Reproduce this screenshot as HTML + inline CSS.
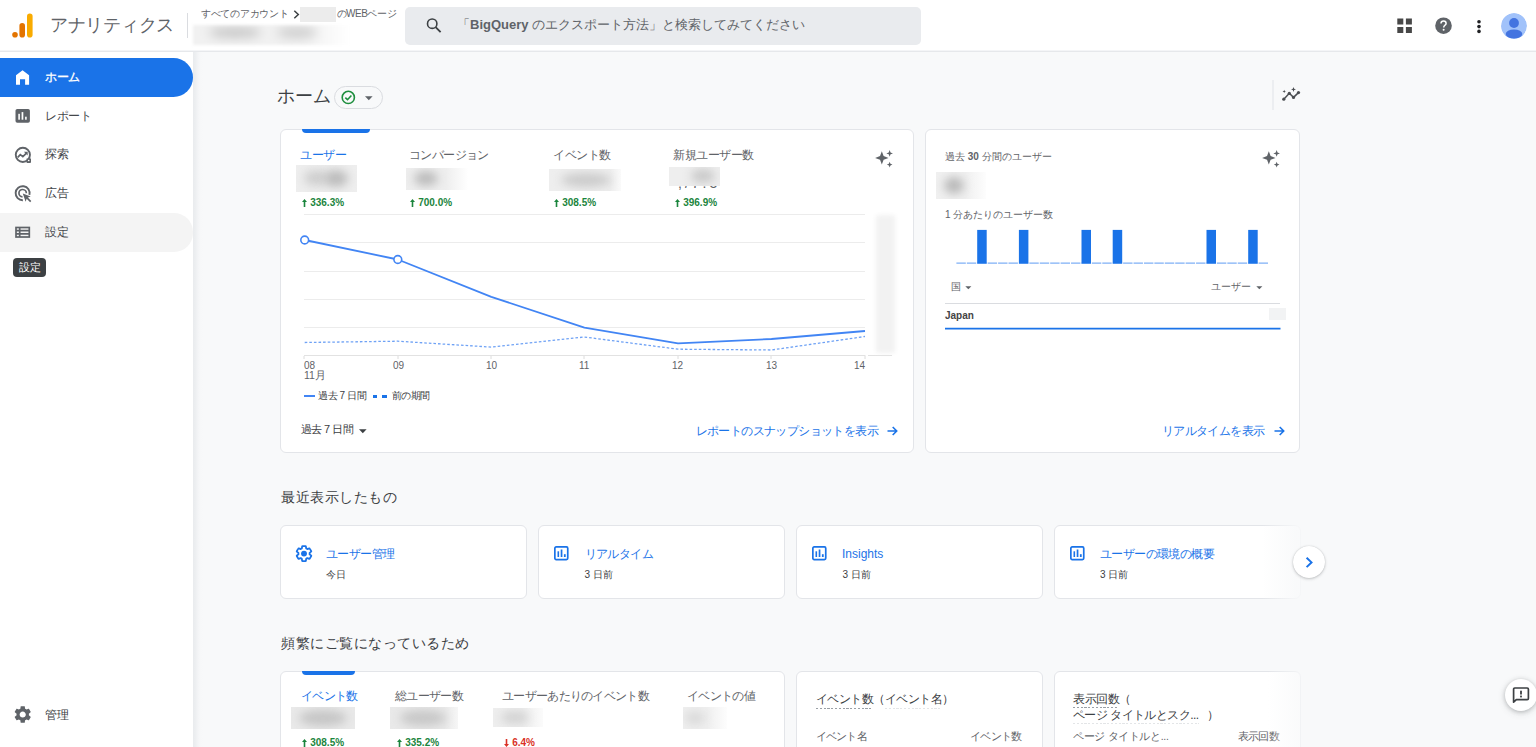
<!DOCTYPE html>
<html lang="ja">
<head>
<meta charset="utf-8">
<title>アナリティクス</title>
<style>
*{box-sizing:border-box;margin:0;padding:0}
html,body{width:1536px;height:747px;overflow:hidden}
body{font-family:"Liberation Sans",sans-serif;background:#f8f9fa;color:#3c4043;position:relative;font-size:12px}
.abs{position:absolute}
svg{display:block;position:absolute;overflow:visible}
.t{position:absolute;white-space:nowrap;line-height:1}
/* header */
#hdr{position:absolute;left:0;top:0;width:1536px;height:52px;background:#fff;border-bottom:1px solid #e6e8eb;z-index:5}
#hdr:after{content:"";position:absolute;left:0;top:50px;width:1536px;height:1px;background:#f4f5f7}
#side{position:absolute;left:0;top:50px;width:193px;height:697px;background:#fff;z-index:4}
#side:after{content:"";position:absolute;left:193px;top:0;width:10px;height:697px;background:linear-gradient(90deg,#e9ebee 0,#edeff1 25%,#f3f4f6 50%,#f7f8f9 75%,#f8f9fa 100%)}
.nav{position:absolute;left:0;width:193px;height:38px;border-radius:0 19px 19px 0}
.nav .t{left:45px;top:13px;font-size:12px;letter-spacing:-.4px;color:#44474b}
.card{position:absolute;background:#fff;border:1px solid #e3e5e9;border-radius:6px}
.blue{color:#1a73e8}
.g{color:#5f6368}
.blur{position:absolute;filter:blur(3px);background:#d4d4d4;border-radius:4px}
.bz{position:absolute;background:#eee;overflow:hidden;filter:blur(.7px)}
.bz i{position:absolute;display:block;background:#bcbcbc;filter:blur(5px);border-radius:50%}
.c12{font-size:12px;letter-spacing:-.45px}
.h14{font-size:14px;letter-spacing:.5px;color:#3c4043}
.pct svg{position:static;display:inline-block;vertical-align:-1px;margin-right:3px}
.pct{position:absolute;white-space:nowrap;line-height:1;font-size:10px;font-weight:bold;color:#1b853d}
.pct.red{color:#d93025}
</style>
</head>
<body>

<!-- ================= HEADER ================= -->
<div id="hdr">
  <!-- logo -->
  <svg style="left:12px;top:13px" width="22" height="26" viewBox="0 0 22 26">
    <rect x="15" y="0.6" width="5.6" height="24" rx="2.8" fill="#f9ab00"/>
    <rect x="7.4" y="10" width="5.6" height="14.6" rx="2.8" fill="#e37400"/>
    <circle cx="3" cy="21.8" r="2.8" fill="#e37400"/>
  </svg>
  <div class="t" style="left:50px;top:16px;font-size:18px;color:#5f6368;letter-spacing:-0.3px">アナリティクス</div>
  <div class="abs" style="left:187px;top:13px;width:1px;height:25px;background:#dadce0"></div>
  <!-- property picker -->
  <div class="t" style="left:201px;top:9px;font-size:10px;letter-spacing:-.3px;color:#5f6368">すべてのアカウント</div>
  <svg style="left:293px;top:10px" width="7" height="9" viewBox="0 0 7 9"><path d="M1.300 0.800 L5.300 4.500 L1.300 8.200" fill="none" stroke="#3c4043" stroke-width="1.500"/></svg>
  <div class="abs" style="left:300px;top:7px;width:36px;height:15px;background:#ececec"></div>
  <div class="t" style="left:336.500px;top:9px;font-size:10px;letter-spacing:-.45px;color:#5f6368">のWEBページ</div>
  <div class="bz" style="left:193px;top:25px;width:157px;height:20px;background:linear-gradient(90deg,#f1f1f1 70%,#fff);filter:blur(1.500px)"><i style="left:16px;top:2px;width:52px;height:11px;background:#c9c9c9"></i><i style="left:84px;top:2px;width:40px;height:11px;background:#cfcfcf"></i></div>
  <!-- search -->
  <div class="abs" style="left:405px;top:6.500px;width:516px;height:38.500px;background:#e9ebee;border-radius:5px"></div>
  <svg style="left:425px;top:17px" width="18" height="18" viewBox="0 0 18 18">
    <circle cx="7.200" cy="6.700" r="4.700" fill="none" stroke="#3c4043" stroke-width="1.600"/>
    <path d="M10.600 10.100 L15.600 15.100" stroke="#3c4043" stroke-width="1.800" stroke-linecap="butt"/>
  </svg>
  <div class="t" style="left:457px;top:17.500px;font-size:13px;color:#5f6368">「<b>BigQuery</b> のエクスポート方法」と検索してみてください</div>
  <!-- right icons -->
  <svg style="left:1397px;top:18px" width="15" height="15" viewBox="0 0 15 15">
    <rect x="0.3" y="0.5" width="6" height="6" fill="#474747"/><rect x="8.9" y="0.5" width="6" height="6" fill="#474747"/>
    <rect x="0.3" y="9" width="6" height="6" fill="#474747"/><rect x="8.9" y="9" width="6" height="6" fill="#474747"/>
  </svg>
  <svg style="left:1435px;top:17px" width="17" height="17" viewBox="0 0 17 17">
    <circle cx="8.5" cy="8.7" r="8.3" fill="#5f6368"/>
    <path d="M6 6.6c0-1.5 1.1-2.5 2.6-2.5s2.5 1 2.5 2.3c0 1.8-2.4 2-2.4 4" fill="none" stroke="#fff" stroke-width="1.5"/>
    <circle cx="8.6" cy="12.8" r="1" fill="#fff"/>
  </svg>
  <svg style="left:1476px;top:19px" width="6" height="15" viewBox="0 0 6 15">
    <circle cx="3" cy="2.8" r="1.8" fill="#202124"/><circle cx="3" cy="7.6" r="1.8" fill="#202124"/><circle cx="3" cy="12.4" r="1.8" fill="#202124"/>
  </svg>
  <svg style="left:1501px;top:12.600px;border-radius:50%;overflow:hidden" width="26" height="26" viewBox="0 0 26 26">
    <circle cx="13" cy="13" r="13" fill="#a1c2fa"/>
    <circle cx="13" cy="10" r="4.900" fill="#4374e0"/><ellipse cx="13" cy="21" rx="8.300" ry="4.600" fill="#4374e0"/>
  </svg>
</div>

<!-- ================= SIDEBAR ================= -->
<div id="side">
  <div class="nav" style="top:8px;height:39px;border-radius:0 20px 20px 0;background:#1a73e8"><div class="t" style="color:#fff;-webkit-text-stroke:.35px #fff">ホーム</div></div>
  <div class="nav" style="top:47px"><div class="t">レポート</div></div>
  <div class="nav" style="top:85px"><div class="t">探索</div></div>
  <div class="nav" style="top:124px"><div class="t">広告</div></div>
  <div class="nav" style="top:163px;height:38.500px;background:#f4f4f4"><div class="t">設定</div></div>
  <div class="abs" style="left:13px;top:208px;width:33px;height:19px;background:#3c4043;border-radius:4px"></div>
  <div class="t" style="left:19px;top:212px;font-size:11px;color:#fff">設定</div>
  <div class="t" style="left:45px;top:659px;font-size:12px;letter-spacing:-.4px;color:#3c4043">管理</div>
  
  <svg style="left:0;top:0" width="193" height="697" viewBox="0 0 193 697">
    <!-- home -->
    <path d="M22.55 20.2 L29.100 25.300 V34.800 H25.100 V29.300 H20 V34.800 H16 V25.300 Z" fill="#fff"/>
    <!-- reports -->
    <rect x="15.500" y="58.900" width="14.400" height="13.900" rx="1.800" fill="#5f6368"/>
    <rect x="18.300" y="63.800" width="1.600" height="5.900" fill="#fff"/><rect x="21.600" y="62.100" width="1.700" height="7.600" fill="#fff"/><rect x="25.100" y="66.700" width="1.600" height="3" fill="#fff"/>
    <!-- explore -->
    <circle cx="22.850" cy="104.850" r="7.100" fill="none" stroke="#5f6368" stroke-width="1.900"/>
    <path d="M26.600 108.600 H31 V112 Q31 113 30 113 H26.600 Z" fill="#5f6368"/>
    <circle cx="28.700" cy="110.500" r="0.800" fill="#fff"/>
    <path d="M17.700 107.300 L20.300 104.700 L22.850 106.700 L26.500 103.100" fill="none" stroke="#5f6368" stroke-width="1.700"/>
    <path d="M23.900 101.700 H27.700 V105.500 Z" fill="#5f6368"/>
    <!-- advertising -->
    <path d="M29.43 144.89 A7 7 0 1 0 22.88 150.20" fill="none" stroke="#5f6368" stroke-width="1.900"/>
    <path d="M26.34 143.33 A3.700 3.700 0 1 0 22.51 146.90" fill="none" stroke="#5f6368" stroke-width="1.700"/>
    <path d="M22.800 143.400 L30.700 146.400 L27.900 147.600 L31.300 151 L30.100 152.200 L26.700 148.800 L25.600 151.700 Z" fill="#5f6368"/>
    <!-- configure -->
    <g fill="none" stroke="#5f6368" stroke-width="1.700">
      <rect x="16" y="177.500" width="13.300" height="9.500"/>
      <path d="M16 180.650 H29.300 M16 183.850 H29.300 M19.700 177.500 V187"/>
    </g>
    <!-- admin gear -->
    <g transform="translate(12.400,654.200) scale(0.860)"><path d="M19.14 12.94c.04-.3.06-.61.06-.94 0-.32-.02-.64-.07-.94l2.03-1.58c.18-.14.23-.41.12-.61l-1.92-3.32c-.12-.22-.37-.29-.59-.22l-2.39.96c-.5-.38-1.03-.7-1.62-.94l-.36-2.54c-.04-.24-.24-.41-.48-.41h-3.84c-.24 0-.43.17-.47.41l-.36 2.54c-.59.24-1.13.57-1.62.94l-2.39-.96c-.22-.08-.47 0-.59.22L2.74 8.87c-.12.21-.08.47.12.61l2.03 1.58c-.05.3-.09.63-.09.94s.02.64.07.94l-2.03 1.58c-.18.14-.23.41-.12.61l1.92 3.32c.12.22.37.29.59.22l2.39-.96c.5.38 1.03.7 1.62.94l.36 2.54c.05.24.24.41.48.41h3.84c.24 0 .44-.17.47-.41l.36-2.54c.59-.24 1.13-.56 1.62-.94l2.39.96c.22.08.47 0 .59-.22l1.92-3.32c.12-.22.07-.47-.12-.61l-2.01-1.58zM12 15.6c-1.98 0-3.6-1.62-3.6-3.6s1.62-3.6 3.600-3.600 3.600 1.620 3.600 3.600-1.620 3.600-3.600 3.600z" fill="#5f6368"/></g>
  </svg>

</div>

<!-- ================= PAGE TITLE ================= -->
<div class="t" style="left:277px;top:87px;font-size:18px;color:#3c4043">ホーム</div>
<div class="abs" style="left:334px;top:86px;width:49px;height:23px;border:1px solid #dadce0;border-radius:12px"></div>
<svg style="left:341px;top:90px" width="15" height="15" viewBox="0 0 15 15">
  <circle cx="7.3" cy="7.4" r="6.1" fill="none" stroke="#1e8e3e" stroke-width="1.6"/>
  <path d="M4.3 7.6 L6.5 9.7 L10.4 5.5" fill="none" stroke="#1e8e3e" stroke-width="1.6"/>
</svg>
<svg style="left:365px;top:95.5px" width="8" height="5" viewBox="0 0 8 5"><path d="M0 0.3h7.6L3.8 4.2z" fill="#5f6368"/></svg>
<div class="abs" style="left:1272px;top:80px;width:2px;height:29.500px;background:#eceef1"></div>
<svg style="left:1280px;top:85px" width="22" height="18" viewBox="1280 85 22 18">
  <polyline points="1283.800,99.200 1289.300,93.300 1293.500,97.400 1298.500,92.600" fill="none" stroke="#4a4d51" stroke-width="1.500"/>
  <g fill="#4a4d51"><circle cx="1283.800" cy="99.200" r="1.600"/><circle cx="1289.300" cy="93.300" r="1.600"/><circle cx="1293.500" cy="97.400" r="1.600"/><circle cx="1298.500" cy="92.600" r="1.600"/>
  <path d="M1293.500 86.900 l.700 1.800 1.800.700 -1.800.700 -.700 1.800 -.700-1.800 -1.800-.700 1.800-.700z"/>
  <path d="M1284.200 89.700 l.500 1.200 1.200.500 -1.200.500 -.500 1.200 -.500-1.200 -1.200-.500 1.200-.500z"/></g>
</svg>


<!-- ================= CARD 1 : overview chart ================= -->
<div class="card" style="left:280px;top:129px;width:633.500px;height:324px"></div>
<div class="abs" style="left:302px;top:129px;width:68px;height:4px;background:#1a73e8;border-radius:0 0 4px 4px"></div>
<div class="t blue" style="left:300px;top:149px;font-size:12px;letter-spacing:-.45px">ユーザー</div>
<div class="t g" style="left:409px;top:149px;font-size:12px;letter-spacing:-.6px">コンバージョン</div>
<div class="t g" style="left:553px;top:149px;font-size:12px;letter-spacing:-.45px">イベント数</div>
<div class="t g" style="left:673px;top:149px;font-size:12px;letter-spacing:-.45px">新規ユーザー数</div>
<div class="bz" style="left:296px;top:165px;width:61px;height:27px"><i style="left:8px;top:5px;width:24px;height:16px;background:#cfcfcf"></i><i style="left:28px;top:5px;width:24px;height:17px"></i></div>
<div class="bz" style="left:406px;top:168px;width:73px;height:22px;background:linear-gradient(90deg,#eee 55%,#fff 85%)"><i style="left:8px;top:3px;width:24px;height:15px"></i></div>
<div class="bz" style="left:549px;top:169px;width:72px;height:22px;background:linear-gradient(90deg,#eee 85%,#fafafa)"><i style="left:12px;top:4px;width:50px;height:14px;background:#cbcbcb"></i></div>
<div class="t" style="left:678px;top:176px;font-size:14px;color:#5f6368;letter-spacing:3px">,/7.3</div>
<div class="bz" style="left:669px;top:167px;width:51px;height:19px"><i style="left:22px;top:2px;width:24px;height:14px;background:#c9c9c9"></i></div>
<div class="pct" style="left:302.2px;top:197.5px"><svg width="5" height="8" viewBox="0 0 5 8"><path d="M2.500 0 L5 2.900 H3.300 V8 H1.700 V2.900 H0 Z" fill="currentColor"/></svg>336.3%</div>
<div class="pct" style="left:410.2px;top:197.5px"><svg width="5" height="8" viewBox="0 0 5 8"><path d="M2.500 0 L5 2.900 H3.300 V8 H1.700 V2.900 H0 Z" fill="currentColor"/></svg>700.0%</div>
<div class="pct" style="left:554.2px;top:197.5px"><svg width="5" height="8" viewBox="0 0 5 8"><path d="M2.500 0 L5 2.900 H3.300 V8 H1.700 V2.900 H0 Z" fill="currentColor"/></svg>308.5%</div>
<div class="pct" style="left:675.2px;top:197.5px"><svg width="5" height="8" viewBox="0 0 5 8"><path d="M2.500 0 L5 2.900 H3.300 V8 H1.700 V2.900 H0 Z" fill="currentColor"/></svg>396.9%</div>
<svg style="left:874px;top:149.500px" width="19" height="17.500" viewBox="0 0 17 15.500"><path d="M7 1 L8.600 5.400 L13 7 L8.600 8.600 L7 13 L5.400 8.600 L1 7 L5.400 5.400 Z M14 0 l.800 2.200 2.200.800 -2.200.800 -.800 2.200 -.800-2.200 -2.200-.800 2.200-.800z M14 10.500 l.700 1.800 1.800.700 -1.800.700 -.700 1.800 -.700-1.800 -1.800-.700 1.800-.700z" fill="#5f6368"/></svg>
<svg style="left:281px;top:129px" width="632" height="323" viewBox="281 129 632 323">
  <g stroke="#ececec" stroke-width="1">
    <path d="M304 214.500H865M304 242.500H865M304 271.500H865M304 299.500H865M304 327.500H865"/>
  </g>
  <path d="M304 355.500H865.500M868 355.500H892" stroke="#e2e2e2" stroke-width="1"/>
  <path d="M304 356v3M398 356v3M491 356v3M584 356v3M678 356v3M771 356v3M865 356v3" stroke="#dcdcdc" stroke-width="1"/>
  <polyline points="304.700,342.500 397.800,341.200 491.300,347.100 584.400,337 678,349.200 771.500,350 865,336.500" fill="none" stroke="#6fa2f5" stroke-width="1.300" stroke-dasharray="2.600 2"/>
  <polyline points="304.700,240 397.800,259.500 491.300,296.800 584.400,327.600 678,343.300 771.500,339 865,331" fill="none" stroke="#4285f4" stroke-width="1.800" stroke-linejoin="round"/>
  <circle cx="304.700" cy="240" r="3.900" fill="#fff" stroke="#4285f4" stroke-width="1.600"/>
  <circle cx="397.800" cy="259.500" r="3.900" fill="#fff" stroke="#4285f4" stroke-width="1.600"/>
</svg>
<div class="blur" style="left:876px;top:215px;width:19px;height:138px;background:#f2f2f2;filter:blur(2.200px);border-radius:2px"></div>
<div class="t g" style="left:304px;top:361px;font-size:10px">08</div>
<div class="t g" style="left:304px;top:370px;font-size:10.500px">11月</div>
<div class="t g" style="left:393px;top:361px;font-size:10px">09</div>
<div class="t g" style="left:486px;top:361px;font-size:10px">10</div>
<div class="t g" style="left:579px;top:361px;font-size:10px">11</div>
<div class="t g" style="left:672px;top:361px;font-size:10px">12</div>
<div class="t g" style="left:766px;top:361px;font-size:10px">13</div>
<div class="t g" style="left:854px;top:361px;font-size:10px">14</div>
<div class="abs" style="left:304px;top:395.300px;width:10.500px;height:2px;background:#4285f4"></div>
<div class="t" style="left:318px;top:391px;font-size:10px;letter-spacing:-.4px;color:#3c4043">過去 7 日間</div>
<div class="abs" style="left:373px;top:395px;width:4px;height:3px;background:#1a73e8"></div>
<div class="abs" style="left:382.300px;top:395px;width:4.300px;height:3px;background:#1a73e8"></div>
<div class="t" style="left:391.500px;top:391px;font-size:10px;letter-spacing:-.4px;color:#3c4043">前の期間</div>
<div class="t" style="left:300.500px;top:424px;font-size:11px;letter-spacing:-.5px;color:#3c4043">過去 7 日間</div>
<svg style="left:358.500px;top:428.500px" width="8" height="5" viewBox="0 0 8 5"><path d="M0 0.300h7.600L3.800 4.200z" fill="#3c4043"/></svg>
<div class="t blue" style="right:658px;top:425px;font-size:12px;letter-spacing:-.600px">レポートのスナップショットを表示</div>
<svg style="left:887px;top:426px" width="11" height="10" viewBox="0 0 11 10"><path d="M0.500 5H9.500M5.700 1L9.700 5L5.700 9" fill="none" stroke="#1a73e8" stroke-width="1.600"/></svg>

<!-- ================= CARD 2 : realtime ================= -->
<div class="card" style="left:924.500px;top:129px;width:375.500px;height:324px"></div>
<div class="t g" style="left:945px;top:152px;font-size:10px">過去 <b>30</b> 分間のユーザー</div>
<svg style="left:1260.700px;top:149.500px" width="19" height="17.500" viewBox="0 0 17 15.500"><path d="M7 1 L8.600 5.400 L13 7 L8.600 8.600 L7 13 L5.400 8.600 L1 7 L5.400 5.400 Z M14 0 l.800 2.200 2.200.800 -2.200.800 -.800 2.200 -.800-2.200 -2.200-.800 2.200-.800z M14 10.500 l.700 1.800 1.800.700 -1.800.700 -.700 1.800 -.700-1.800 -1.800-.700 1.800-.700z" fill="#5f6368"/></svg>
<div class="bz" style="left:936px;top:172px;width:50px;height:27px;background:linear-gradient(90deg,#f0f0f0 60%,#fdfdfd)"><i style="left:8px;top:5px;width:20px;height:17px;background:#b9b9b9"></i></div>
<div class="t g" style="left:945px;top:210px;font-size:10px">1 分あたりのユーザー数</div>
<svg style="left:925px;top:129px" width="375" height="323" viewBox="925 129 375 323">
  <path d="M956.400 263.100H1269" stroke="#7fb0f6" stroke-width="1.400" stroke-dasharray="9.420 1"/>
  <g fill="#1a73e8">
    <rect x="977.200" y="229.900" width="9.500" height="33.700"/>
    <rect x="1018.900" y="229.900" width="9.500" height="33.700"/>
    <rect x="1081.500" y="229.900" width="9.500" height="33.700"/>
    <rect x="1112.700" y="229.900" width="9.500" height="33.700"/>
    <rect x="1206.500" y="229.900" width="9.500" height="33.700"/>
    <rect x="1248.200" y="229.900" width="9.500" height="33.700"/>
  </g>
  <path d="M945 303.500H1280" stroke="#dadce0" stroke-width="1"/>
  <path d="M945 328.600H1280.500" stroke="#1a73e8" stroke-width="1.600"/>
</svg>
<div class="t g" style="left:951px;top:282px;font-size:10px">国</div>
<svg style="left:965px;top:286px" width="7" height="4" viewBox="0 0 8 5"><path d="M0 0.300h7.600L3.800 4.200z" fill="#5f6368"/></svg>
<div class="t g" style="left:1211px;top:282px;font-size:10px">ユーザー</div>
<svg style="left:1256px;top:286px" width="7" height="4" viewBox="0 0 8 5"><path d="M0 0.300h7.600L3.800 4.200z" fill="#5f6368"/></svg>
<div class="t" style="left:945px;top:311px;font-size:10px;font-weight:bold;color:#444">Japan</div>
<div class="abs" style="left:1268.500px;top:308px;width:17px;height:12px;background:#f2f3f4"></div>
<div class="t blue" style="right:271.500px;top:425px;font-size:12px;letter-spacing:-.600px">リアルタイムを表示</div>
<svg style="left:1274px;top:426px" width="11" height="10" viewBox="0 0 11 10"><path d="M0.500 5H9.500M5.700 1L9.700 5L5.700 9" fill="none" stroke="#1a73e8" stroke-width="1.600"/></svg>


<!-- ================= RECENT ================= -->
<div class="t h14" style="left:281px;top:489.500px">最近表示したもの</div>
<div class="card" style="left:280px;top:525px;width:247px;height:74px"></div>
<div class="card" style="left:538px;top:525px;width:246.600px;height:74px"></div>
<div class="card" style="left:795.700px;top:525px;width:247px;height:74px"></div>
<div class="card" style="left:1053.500px;top:525px;width:247px;height:74px"></div>
<div class="abs" style="left:1262px;top:524px;width:40px;height:76px;background:linear-gradient(90deg,rgba(248,249,250,0),rgba(248,249,250,.850) 85%)"></div>

<svg style="left:295px;top:544.500px" width="18" height="18" viewBox="0 0 18 18">
  <g transform="translate(-0.350,-0.750) scale(0.780)"><path d="M19.14 12.94c.04-.3.06-.61.06-.94 0-.32-.02-.64-.07-.94l2.03-1.58c.18-.14.23-.41.12-.61l-1.92-3.32c-.12-.22-.37-.29-.59-.22l-2.39.96c-.5-.38-1.03-.7-1.62-.94l-.36-2.54c-.04-.24-.24-.41-.48-.41h-3.84c-.24 0-.43.17-.47.41l-.36 2.54c-.59.24-1.13.57-1.62.94l-2.39-.96c-.22-.08-.47 0-.59.22L2.74 8.870c-.12.21-.08.47.12.61l2.030 1.580c-.05.3-.09.63-.09.94s.02.64.07.94l-2.030 1.580c-.18.14-.23.41-.12.61l1.920 3.320c.12.22.37.29.59.22l2.390-.960c.5.38 1.030.7 1.620.94l.36 2.540c.05.24.24.41.48.41h3.840c.24 0 .44-.17.47-.41l.36-2.540c.59-.24 1.130-.56 1.620-.94l2.390.96c.22.08.47 0 .59-.22l1.920-3.320c.12-.22.07-.47-.12-.61l-2.010-1.580z" fill="none" stroke="#1a73e8" stroke-width="2.300" stroke-linejoin="round"/><circle cx="12" cy="12" r="3.800" fill="#1a73e8"/></g>
</svg>
<div class="t blue" style="left:326px;top:547.500px;font-size:12px;letter-spacing:-.6px">ユーザー管理</div>
<div class="t" style="left:326px;top:570px;font-size:10px;color:#3c4043">今日</div>

<svg style="left:554.2px;top:546.300px" width="15" height="15" viewBox="0 0 15 15">
  <rect x="0.850" y="0.850" width="12.900" height="12.800" rx="1.300" fill="none" stroke="#1a73e8" stroke-width="1.700"/>
  <rect x="3.500" y="5.300" width="1.600" height="5.700" fill="#1a73e8"/><rect x="6.700" y="3.500" width="1.700" height="7.500" fill="#1a73e8"/><rect x="9.900" y="8.200" width="1.800" height="2.800" fill="#1a73e8"/>
</svg>
<div class="t blue" style="left:584.500px;top:547.500px;font-size:12px;letter-spacing:-.6px">リアルタイム</div>
<div class="t" style="left:584.500px;top:570px;font-size:10px;color:#3c4043">3 日前</div>

<svg style="left:812.2px;top:546.300px" width="15" height="15" viewBox="0 0 15 15">
  <rect x="0.850" y="0.850" width="12.900" height="12.800" rx="1.300" fill="none" stroke="#1a73e8" stroke-width="1.700"/>
  <rect x="3.500" y="5.300" width="1.600" height="5.700" fill="#1a73e8"/><rect x="6.700" y="3.500" width="1.700" height="7.500" fill="#1a73e8"/><rect x="9.900" y="8.200" width="1.800" height="2.800" fill="#1a73e8"/>
</svg>
<div class="t blue" style="left:842px;top:548px;font-size:12px">Insights</div>
<div class="t" style="left:842.500px;top:570px;font-size:10px;color:#3c4043">3 日前</div>

<svg style="left:1069.7px;top:546.300px" width="15" height="15" viewBox="0 0 15 15">
  <rect x="0.850" y="0.850" width="12.900" height="12.800" rx="1.300" fill="none" stroke="#1a73e8" stroke-width="1.700"/>
  <rect x="3.500" y="5.300" width="1.600" height="5.700" fill="#1a73e8"/><rect x="6.700" y="3.500" width="1.700" height="7.500" fill="#1a73e8"/><rect x="9.900" y="8.200" width="1.800" height="2.800" fill="#1a73e8"/>
</svg>
<div class="t blue" style="left:1100px;top:547.500px;font-size:12px;letter-spacing:-.6px">ユーザーの環境の概要</div>
<div class="t" style="left:1100px;top:570px;font-size:10px;color:#3c4043">3 日前</div>

<div class="abs" style="left:1293px;top:546px;width:32.400px;height:32.400px;border-radius:50%;background:#fff;box-shadow:0 1px 3px rgba(60,64,67,.280),0 0 1px rgba(60,64,67,.250)"></div>
<svg style="left:1304px;top:556px" width="10" height="13" viewBox="0 0 10 13"><path d="M2.600 1.700 L7.500 6.400 L2.600 11.100" fill="none" stroke="#1a73e8" stroke-width="2"/></svg>

<!-- ================= FREQUENT ================= -->
<div class="t h14" style="left:281px;top:636px">頻繁にご覧になっているため</div>
<div class="card" style="left:280px;top:671px;width:504.600px;height:90px"></div>
<div class="abs" style="left:302px;top:671px;width:53px;height:4px;background:#1a73e8;border-radius:0 0 4px 4px"></div>
<div class="t blue" style="left:301px;top:690px;font-size:12px;letter-spacing:-.7px">イベント数</div>
<div class="t g" style="left:395px;top:690px;font-size:12px;letter-spacing:-.7px">総ユーザー数</div>
<div class="t g" style="left:502px;top:690px;font-size:12px;letter-spacing:-.7px">ユーザーあたりのイベント数</div>
<div class="t g" style="left:687px;top:690px;font-size:12px;letter-spacing:-.7px">イベントの値</div>
<div class="bz" style="left:291px;top:707px;width:64px;height:22px;background:#e9e9e9"><i style="left:8px;top:3px;width:48px;height:16px;background:#c6c6c6"></i></div>
<div class="bz" style="left:390px;top:707px;width:68px;height:22px;background:linear-gradient(90deg,#e9e9e9 80%,#f6f6f6)"><i style="left:10px;top:3px;width:46px;height:16px;background:#c8c8c8"></i></div>
<div class="bz" style="left:493px;top:708px;width:50px;height:19px;background:linear-gradient(90deg,#eee 60%,#fbfbfb)"><i style="left:8px;top:3px;width:28px;height:13px;background:#d2d2d2"></i></div>
<div class="bz" style="left:683px;top:707px;width:44px;height:22px;background:linear-gradient(90deg,#efefef 55%,#fdfdfd)"><i style="left:2px;top:4px;width:20px;height:14px;background:#dadada"></i></div>
<div class="pct" style="left:302.2px;top:737.5px"><svg width="5" height="8" viewBox="0 0 5 8"><path d="M2.500 0 L5 2.900 H3.300 V8 H1.700 V2.900 H0 Z" fill="currentColor"/></svg>308.5%</div>
<div class="pct" style="left:397.2px;top:737.5px"><svg width="5" height="8" viewBox="0 0 5 8"><path d="M2.500 0 L5 2.900 H3.300 V8 H1.700 V2.900 H0 Z" fill="currentColor"/></svg>335.2%</div>
<div class="pct red" style="left:504.2px;top:737.5px"><svg width="5" height="8" viewBox="0 0 5 8"><path d="M2.500 8 L5 5.100 H3.300 V0 H1.700 V5.100 H0 Z" fill="currentColor"/></svg>6.4%</div>

<div class="card" style="left:795.700px;top:671px;width:247px;height:90px"></div>
<div class="t" style="left:815.500px;top:693px;font-size:12px;letter-spacing:-.5px;color:#3c4043"><span style="background:repeating-linear-gradient(90deg,#9aa0a6 0 2.200px,transparent 2.200px 3.800px) left bottom/100% 1.500px no-repeat;padding-bottom:3px">イベント数</span>（<span style="background:repeating-linear-gradient(90deg,#e3e5e7 0 2.200px,transparent 2.200px 3.800px) left bottom/100% 1.500px no-repeat;padding-bottom:3px">イベント名</span>）</div>
<div class="t g" style="left:815.500px;top:730.500px;font-size:10.500px;letter-spacing:-.7px">イベント名</div>
<div class="t g" style="right:514.500px;top:730.500px;font-size:10.500px;letter-spacing:-.7px">イベント数</div>

<div class="card" style="left:1053.500px;top:671px;width:247px;height:90px"></div>
<div class="t" style="left:1073px;top:693px;font-size:12px;letter-spacing:-.4px;color:#3c4043"><span style="background:repeating-linear-gradient(90deg,#9aa0a6 0 2.200px,transparent 2.200px 3.800px) left bottom/100% 1.500px no-repeat;padding-bottom:2px">表示回数</span>（</div>
<div class="t" style="left:1073px;top:709px;font-size:12px;letter-spacing:-.55px;color:#3c4043"><span style="background:repeating-linear-gradient(90deg,#e3e5e7 0 2.200px,transparent 2.200px 3.800px) left bottom/100% 1.500px no-repeat;padding-bottom:2px">ページ タイトルとスク...</span>&nbsp;&nbsp;&nbsp;）</div>
<div class="t g" style="left:1073px;top:730.500px;font-size:10.500px;letter-spacing:-.35px">ページ タイトルと...</div>
<div class="t g" style="right:257px;top:730.500px;font-size:10.500px;letter-spacing:-.7px">表示回数</div>

<div class="abs" style="left:1268px;top:670px;width:34px;height:77px;background:linear-gradient(90deg,rgba(248,249,250,0),rgba(248,249,250,.700) 90%)"></div>
<!-- feedback fab -->
<div class="abs" style="left:1505px;top:679px;width:32px;height:32px;border-radius:50%;background:#fff;box-shadow:0 1px 4px rgba(60,64,67,.300),0 2px 8px rgba(60,64,67,.120)"></div>
<svg style="left:1512px;top:687px" width="18" height="17" viewBox="0 0 18 17">
  <path d="M1.600 15.200 V2.200 Q1.600 1 2.800 1 H15.200 Q16.400 1 16.400 2.200 V11.400 Q16.400 12.600 15.200 12.600 H4.300 Z" fill="none" stroke="#3c4043" stroke-width="1.700" stroke-linejoin="round"/>
  <rect x="8.100" y="3.700" width="1.800" height="3.800" fill="#3c4043"/><rect x="8.100" y="8.600" width="1.800" height="1.800" fill="#3c4043"/>
</svg>



</body>
</html>
